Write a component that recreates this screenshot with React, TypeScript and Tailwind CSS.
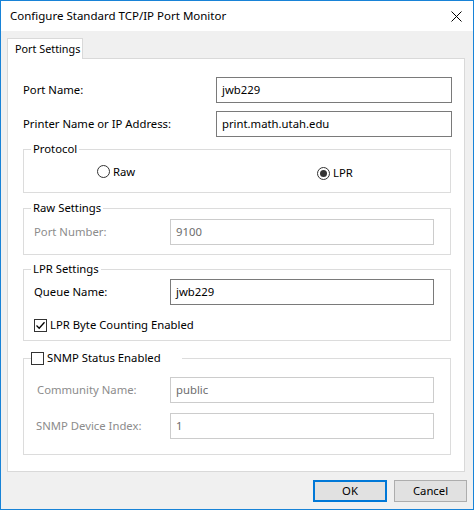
import type { ReactNode } from 'react'

const font = { fontFamily: '"Noto Sans", "Liberation Sans", sans-serif' }

function TextBox({ value, disabled, className }: { value: string; disabled?: boolean; className?: string }) {
  return (
    <div
      className={`flex items-center border bg-white pl-[5px] ${
        disabled ? 'border-[#cccccc] text-[#6d6d6d]' : 'border-[#7a7a7a] text-black'
      } ${className ?? ''}`}
    >
      {value}
    </div>
  )
}

function CheckBox({ checked }: { checked?: boolean }) {
  return (
    <span className="flex h-[13px] w-[13px] shrink-0 items-center justify-center border border-[#333333] bg-white">
      {checked && (
        <svg width="11" height="11" viewBox="0 0 11 11">
          <path d="M1.5 5.5 L4.2 8.2 L9.5 2.2" fill="none" stroke="#000" strokeWidth="1.3" />
        </svg>
      )}
    </span>
  )
}

function Radio({ checked, label }: { checked?: boolean; label: string }) {
  return (
    <div className="flex items-center gap-[3px]">
      <span className="flex h-[13px] w-[13px] items-center justify-center rounded-full border border-[#333333] bg-white">
        {checked && <span className="h-[7px] w-[7px] rounded-full bg-[#333333]" />}
      </span>
      <span>{label}</span>
    </div>
  )
}

function GroupBox({
  legend,
  className,
  children,
}: {
  legend: ReactNode
  className?: string
  children: ReactNode
}) {
  return (
    <div className={`relative ml-[15px] w-[428px] border border-[#dcdcdc] ${className ?? ''}`}>
      <div className="absolute top-[-9px] left-[7px] flex items-center whitespace-nowrap bg-white px-[2px] leading-[16px]">
        {legend}
      </div>
      {children}
    </div>
  )
}

export default function App() {
  return (
    <div
      className="flex h-[510px] w-[474px] flex-col border border-[#1883d7] bg-[#f0f0f0] text-[11.3px] text-black"
      style={font}
    >
      {/* title bar */}
      <div className="flex h-[30px] items-center justify-between bg-white pl-[9px] pr-[11px]">
        <span className="text-[11.5px]">Configure Standard TCP/IP Port Monitor</span>
        <svg width="11" height="11" viewBox="0 0 11 11">
          <path d="M0.5 0.5 L10.5 10.5 M10.5 0.5 L0.5 10.5" stroke="#000" strokeWidth="1" />
        </svg>
      </div>

      {/* tab strip */}
      <div className="mt-[7px] pl-[6px]">
        <div className="relative z-10 -mb-px flex h-[21px] w-[76px] items-center whitespace-nowrap border-x border-t border-[#d9d9d9] bg-white pl-[7px] text-[10.8px]">
          Port Settings
        </div>
        <div className="h-[414px] w-[458px] border border-[#d9d9d9] bg-white">
          <div className="flex items-center justify-between pl-[15px] pr-[12px] pt-[18px]">
            <span>Port Name:</span>
            <TextBox value="jwb229" className="h-[26px] w-[236px]" />
          </div>
          <div className="mt-[8px] flex items-center justify-between pl-[15px] pr-[12px]">
            <span>Printer Name or IP Address:</span>
            <TextBox value="print.math.utah.edu" className="h-[26px] w-[236px]" />
          </div>

          <GroupBox legend="Protocol" className="mt-[12px] h-[44px]">
            <div className="flex items-center pt-[12px]">
              <div className="ml-[73px] w-[220px]">
                <Radio label="Raw" />
              </div>
              <div className="mt-[3px]">
                <Radio label="LPR" checked />
              </div>
            </div>
          </GroupBox>

          <GroupBox legend="Raw Settings" className="mt-[15px] h-[47px]">
            <div className="flex items-center pt-[10px] pl-[10px]">
              <span className="w-[136px] text-[#8c8c8c]">Port Number:</span>
              <TextBox value="9100" disabled className="h-[26px] w-[264px]" />
            </div>
          </GroupBox>

          <GroupBox legend="LPR Settings" className="mt-[14px] h-[72px]">
            <div className="flex items-center pt-[9px] pl-[10px]">
              <span className="w-[136px]">Queue Name:</span>
              <TextBox value="jwb229" className="h-[26px] w-[264px]" />
            </div>
            <div className="mt-[12px] flex items-center gap-[3px] pl-[10px]">
              <CheckBox checked />
              <span>LPR Byte Counting Enabled</span>
            </div>
          </GroupBox>

          <GroupBox
            legend={
              <div className="-ml-[2px] flex w-[149px] items-center gap-[3px]">
                <CheckBox />
                <span>SNMP Status Enabled</span>
              </div>
            }
            className="mt-[17px] h-[97px]"
          >
            <div className="flex items-center pt-[18px] pl-[13px]">
              <span className="w-[133px] text-[#8c8c8c]">Community Name:</span>
              <TextBox value="public" disabled className="h-[26px] w-[264px]" />
            </div>
            <div className="mt-[10px] flex items-center pl-[12px]">
              <span className="w-[134px] text-[#8c8c8c]">SNMP Device Index:</span>
              <TextBox value="1" disabled className="h-[26px] w-[264px]" />
            </div>
          </GroupBox>
        </div>
      </div>

      {/* buttons */}
      <div className="mt-[8px] flex justify-end gap-[7px] pr-[6px]">
        <button className="flex h-[22px] w-[74px] items-center justify-center border-2 border-[#0078d7] bg-[#e1e1e1]">
          OK
        </button>
        <button className="flex h-[22px] w-[73px] items-center justify-center border border-[#adadad] bg-[#e1e1e1]">
          Cancel
        </button>
      </div>
    </div>
  )
}
